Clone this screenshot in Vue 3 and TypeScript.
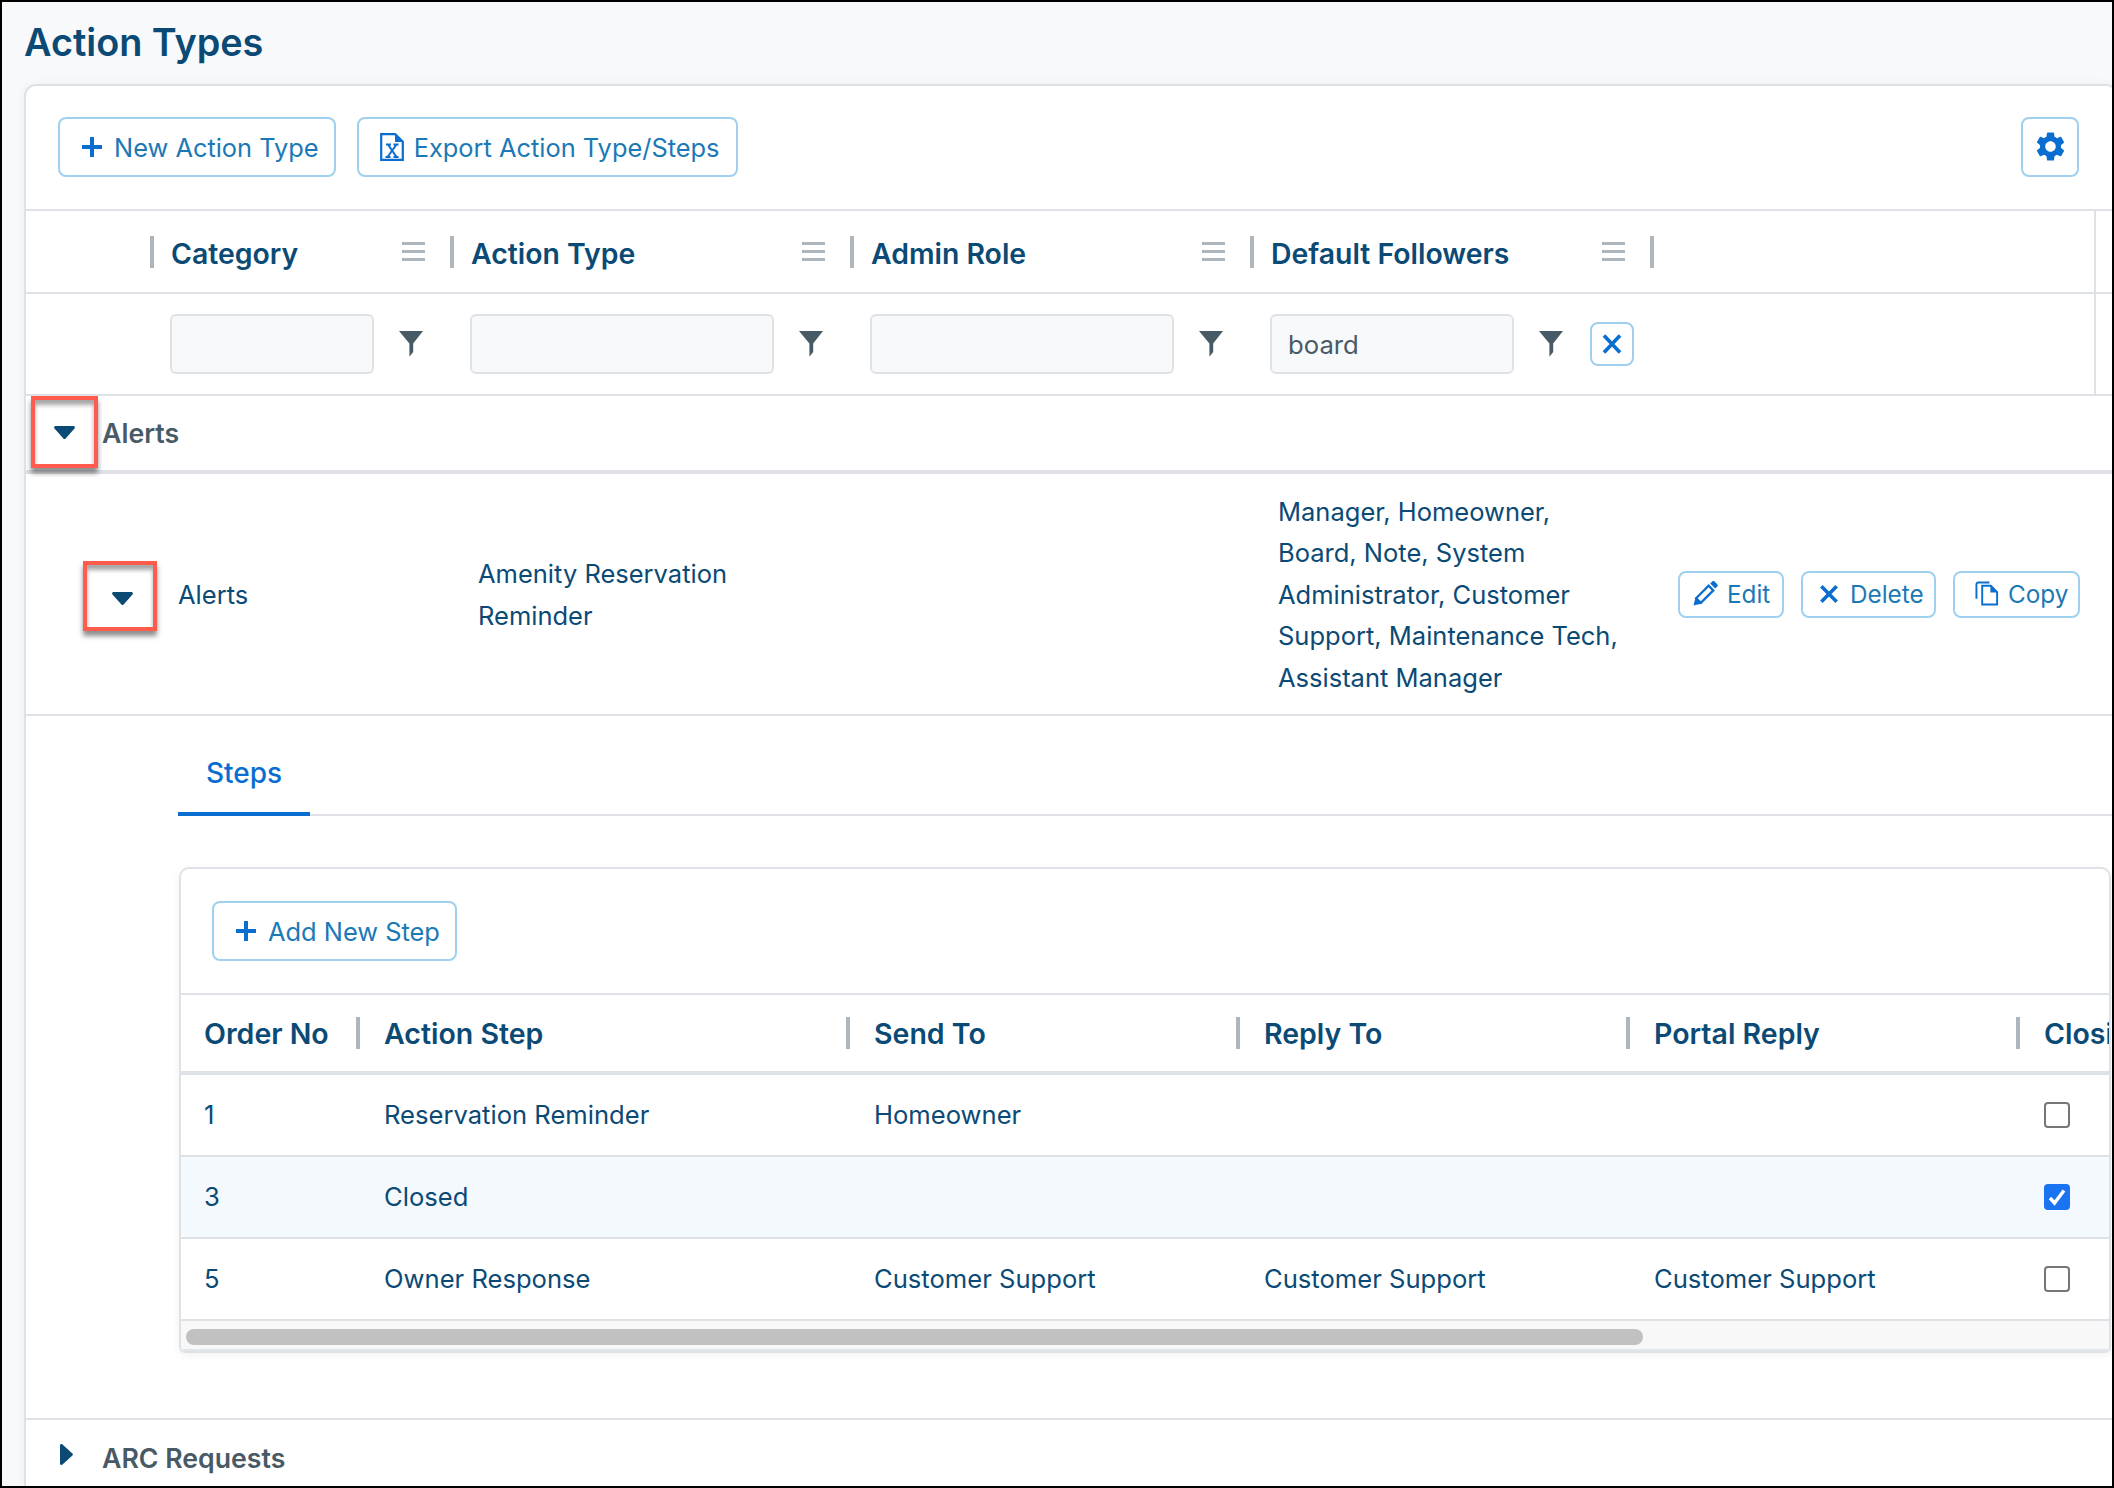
<script setup lang="ts">
/**
 * Action Types 列表页
 */
interface Step {
  order: number
  name: string
  sendTo: string
  replyTo: string
  portalReply: string
  closing: boolean
}

const gridColumns = [
  { key: 'category', label: 'Category' },
  { key: 'actionType', label: 'Action Type' },
  { key: 'adminRole', label: 'Admin Role' },
  { key: 'followers', label: 'Default Followers' },
]

const stepColumns = ['Order No', 'Action Step', 'Send To', 'Reply To', 'Portal Reply', 'Closing']

const steps: Step[] = [
  { order: 1, name: 'Reservation Reminder', sendTo: 'Homeowner', replyTo: '', portalReply: '', closing: false },
  { order: 3, name: 'Closed', sendTo: '', replyTo: '', portalReply: '', closing: true },
  { order: 5, name: 'Owner Response', sendTo: 'Customer Support', replyTo: 'Customer Support', portalReply: 'Customer Support', closing: false },
]
</script>

<template>
  <div class="frame">
    <h1 class="page-title">Action Types</h1>

    <div class="card">
      <div class="toolbar">
        <button class="btn btn-lg">
          <svg class="ico-plus" viewBox="0 0 20 20"><path d="M8 0h4v8h8v4h-8v8H8v-8H0V8h8z" /></svg>
          <span class="btn-text">New Action Type</span>
        </button>
        <button class="btn btn-lg btn-export">
          <svg class="ico-xls" viewBox="0 0 24 28">
            <path d="M1.200 1.200h14l7.600 7.600v18h-21.600z" fill="none" stroke="#0a6ed1" stroke-width="2.200" />
            <path d="M15 1l8 8h-8z" fill="#0a6ed1" />
            <path d="M8 11.500l8.500 12.500M16.500 11.500L7.500 24M6 11.500h5M13.500 11.500h5M5.500 24h5M13.500 24h5" fill="none" stroke="#0a6ed1" stroke-width="2" />
          </svg>
          <span class="btn-text">Export Action Type/Steps</span>
        </button>
        <button class="btn btn-gear">
          <svg viewBox="0 0 24 24" width="35" height="35">
            <path d="M19.14 12.94c.04-.3.06-.61.06-.94 0-.32-.02-.64-.07-.94l2.03-1.58a.49.49 0 0 0 .12-.61l-1.92-3.32a.488.488 0 0 0-.59-.22l-2.39.96c-.5-.38-1.03-.7-1.62-.94l-.36-2.54a.484.484 0 0 0-.48-.41h-3.84c-.24 0-.43.17-.47.41l-.36 2.54c-.59.24-1.13.57-1.62.94l-2.39-.96c-.22-.08-.47 0-.59.22L2.74 8.87c-.12.21-.08.47.12.61l2.03 1.58c-.05.3-.09.63-.09.94s.02.64.07.94l-2.03 1.58a.49.49 0 0 0-.12.61l1.92 3.32c.12.22.37.29.59.22l2.39-.96c.5.38 1.03.7 1.62.94l.36 2.54c.05.24.24.41.48.41h3.84c.24 0 .44-.17.47-.41l.36-2.54c.59-.24 1.13-.56 1.62-.94l2.39.96c.22.08.47 0 .59-.22l1.92-3.32c.12-.22.07-.47-.12-.61l-2.01-1.58zM12 15.6c-1.98 0-3.6-1.62-3.6-3.6s1.62-3.6 3.6-3.6 3.6 1.62 3.6 3.6-1.62 3.6-3.6 3.6z" />
          </svg>
        </button>
      </div>

      <div class="grid-head">
        <div class="head-row grid-cols">
          <span />
          <div v-for="col in gridColumns" :key="col.key" class="head-cell">
            <i class="sep" />
            <span class="head-label">{{ col.label }}</span>
            <span class="menu-ico"><i /><i /><i /></span>
          </div>
          <div class="head-cell"><i class="sep" /></div>
        </div>

        <div class="filter-row grid-cols">
          <span />
          <div v-for="col in gridColumns" :key="col.key" class="filter-cell" :class="`filter-${col.key}`">
            <input class="filter-input" :value="col.key === 'followers' ? 'board' : ''">
            <svg class="ico-filter" viewBox="0 0 24 26"><path d="M0 0h24L14.2 12.6V21L10.4 25.8V12.6z" /></svg>
            <button v-if="col.key === 'followers'" class="btn btn-clear">
              <svg viewBox="0 0 20 20" width="20" height="20"><path d="M2 1.5l16 17M18 1.5l-16 17" stroke="currentColor" stroke-width="3.6" fill="none" /></svg>
            </button>
          </div>
        </div>
      </div>

      <div class="group-row">
        <span class="mark mark-group" />
        <svg class="caret caret-group" viewBox="0 0 21 13"><path d="M1.6 0h17.8c1.3 0 2 1.5 1.1 2.5l-8.9 9.9c-.6.7-1.6.7-2.2 0L.5 2.5C-.4 1.5.3 0 1.6 0z" /></svg>
        <span class="group-label">Alerts</span>
      </div>

      <div class="data-row grid-cols">
        <div class="lead-cell">
          <span class="mark mark-row" />
          <svg class="caret caret-row" viewBox="0 0 21 13"><path d="M1.6 0h17.8c1.3 0 2 1.5 1.1 2.5l-8.9 9.9c-.6.7-1.6.7-2.2 0L.5 2.5C-.4 1.5.3 0 1.6 0z" /></svg>
        </div>
        <div class="data-cell">Alerts</div>
        <div class="data-cell"><span class="wrap-type">Amenity Reservation Reminder</span></div>
        <div class="data-cell" />
        <div class="data-cell"><span class="wrap-followers">Manager, Homeowner, Board, Note, System Administrator, Customer Support, Maintenance Tech, Assistant Manager</span></div>
        <div class="actions">
          <button class="btn btn-sm btn-edit">
            <svg viewBox="0 0 24 24" width="25" height="25" fill="none" stroke="currentColor" stroke-width="2.2">
              <path d="M3 16.500L15 4.500l4.500 4.500L7.500 21z" />
              <path d="M.5 23.500l2-8 6 6z" fill="currentColor" stroke="none" />
              <path d="M16.500 2.500l2-2c.7-.6 1.500-.6 2.200 0l2.600 2.600c.6.7.6 1.500 0 2.200l-2 2z" fill="currentColor" stroke="none" />
            </svg>
            Edit
          </button>
          <button class="btn btn-sm btn-delete">
            <svg viewBox="0 0 20 20" width="18" height="18"><path d="M1.500 1.500l17 17M18.500 1.500l-17 17" stroke="currentColor" stroke-width="4" fill="none" /></svg>
            Delete
          </button>
          <button class="btn btn-sm btn-copy">
            <svg viewBox="0 0 26 26" width="25" height="25" fill="none" stroke="currentColor" stroke-width="2">
              <path d="M15 1.500H3.500a2 2 0 0 0-2 2v15" />
              <path d="M7.500 5h9l6.500 6.500v13H7.500z" />
              <path d="M16 5l7 7h-7z" fill="currentColor" stroke="none" />
            </svg>
            Copy
          </button>
        </div>
      </div>

      <div class="detail">
        <div class="tabs">
          <span class="tab active">Steps</span>
        </div>

        <div class="steps-card">
          <div class="steps-toolbar">
            <button class="btn btn-lg">
              <svg class="ico-plus" viewBox="0 0 20 20"><path d="M8 0h4v8h8v4h-8v8H8v-8H0V8h8z" /></svg>
              <span class="btn-text">Add New Step</span>
            </button>
          </div>

          <div class="steps-head steps-cols">
            <div v-for="(col, i) in stepColumns" :key="col" class="steps-th">
              <i v-if="i > 0" class="sep" />
              <span class="th-label">{{ col }}</span>
            </div>
          </div>

          <div
            v-for="step in steps"
            :key="step.order"
            class="steps-row steps-cols"
            :class="{ selected: step.closing }"
          >
            <div class="steps-td first">{{ step.order }}</div>
            <div class="steps-td">{{ step.name }}</div>
            <div class="steps-td">{{ step.sendTo }}</div>
            <div class="steps-td">{{ step.replyTo }}</div>
            <div class="steps-td">{{ step.portalReply }}</div>
            <div class="steps-td">
              <span class="check" :class="{ on: step.closing }">
                <svg v-if="step.closing" viewBox="0 0 20 20" width="20" height="20"><path d="M3 11l4.500 5L17 3.500" stroke="#fff" stroke-width="3.400" fill="none" /></svg>
              </span>
            </div>
          </div>

          <div class="scroll-track"><span class="scroll-thumb" /></div>
        </div>
      </div>

      <div class="group-row group-closed">
        <svg class="caret-right" viewBox="0 0 13 21"><path d="M0 1.600v17.800c0 1.300 1.500 2 2.500 1.100l9.900-8.900c.7-.6.7-1.600 0-2.200L2.500.5C1.500-.4 0 .3 0 1.600z" /></svg>
        <span class="group-label">ARC Requests</span>
      </div>
    </div>
  </div>
</template>

<style scoped>
.frame {
  box-sizing: border-box;
  width: 2114px;
  height: 1488px;
  border: 2px solid #000;
  background: #f8f9fb;
  overflow: hidden;
  font-family: Inter, "Noto Sans", sans-serif;
  color: #0b4a75;
}

.page-title {
  margin: 0;
  height: 82px;
  padding: 15px 0 0 22px;
  box-sizing: border-box;
  font-size: 37.8px;
  line-height: 50px;
  font-weight: 600;
  color: #0b4a75;
}

.card {
  box-sizing: border-box;
  width: 2094px;
  margin-left: 22px;
  height: 1500px;
  background: #fff;
  border: 2px solid #dee2e6;
  border-radius: 12px 12px 0 0;
  box-shadow: 0 0 10px rgba(0, 0, 0, 0.05);
}

.toolbar {
  box-sizing: border-box;
  height: 125px;
  display: flex;
  align-items: center;
  gap: 21px;
  padding: 0 37px 2px 32px;
  border-bottom: 2px solid #dee2e6;
}

.btn {
  display: inline-flex;
  align-items: center;
  justify-content: center;
  box-sizing: border-box;
  margin: 0;
  padding: 0;
  border: 2px solid #9fd0ef;
  border-radius: 8px;
  background: #fff;
  font-family: inherit;
  color: #1b79b6;
  white-space: nowrap;
}

.btn svg {
  color: #0a6ed1;
  fill: #0a6ed1;
  flex-shrink: 0;
}

.btn-lg {
  height: 60px;
  font-size: 25.4px;
  padding: 0 15px 0 22px;
  gap: 12px;
}

.btn-text {
  padding-top: 2px;
}

.ico-plus {
  width: 20px;
  height: 20px;
}

.btn-export {
  padding-left: 21px;
  padding-right: 16px;
  gap: 10px;
}

.ico-xls {
  width: 24px;
  height: 28px;
}

.btn-gear {
  width: 58px;
  height: 60px;
  margin-left: auto;
  padding: 0;
}

.grid-cols {
  display: grid;
  grid-template-columns: 126px 300px 400px 400px 400px 1fr;
}

.grid-head {
  position: relative;
}

.grid-head::after {
  content: '';
  position: absolute;
  top: 0;
  bottom: 0;
  left: 2068px;
  width: 2px;
  background: #dee2e6;
}

.head-row {
  box-sizing: border-box;
  height: 83px;
  border-bottom: 2px solid #dee2e6;
}

.head-cell {
  display: flex;
  align-items: center;
  padding-right: 27px;
}

.sep {
  flex: none;
  width: 4px;
  height: 32px;
  background: #adb5bd;
}

.head-cell .sep {
  margin-left: -2px;
}

.head-label {
  margin-left: 17px;
  padding-top: 3px;
  font-size: 28.4px;
  font-weight: 600;
  color: #0b4a75;
}

.menu-ico {
  display: flex;
  flex-direction: column;
  gap: 5px;
  margin-left: auto;
  width: 23px;
}

.menu-ico i {
  display: block;
  height: 3px;
  background: #adb5bd;
}

.filter-row {
  box-sizing: border-box;
  height: 102px;
  border-bottom: 2px solid #dee2e6;
}

.filter-cell {
  display: flex;
  align-items: center;
  padding-left: 18px;
}

.filter-input {
  box-sizing: border-box;
  height: 60px;
  width: 204px;
  padding: 0 16px;
  border: 2px solid #dee2e6;
  border-radius: 6px;
  background: #f8f9fb;
  font-family: inherit;
  font-size: 25.7px;
  color: #495a67;
}

.filter-actionType .filter-input,
.filter-adminRole .filter-input {
  width: 304px;
}

.filter-followers .filter-input {
  width: 244px;
}

.ico-filter {
  width: 24px;
  height: 26px;
  margin-left: 25px;
  fill: #495a67;
}

.btn-clear {
  width: 44px;
  height: 44px;
  margin-left: 27px;
}

.btn-clear svg {
  fill: none;
}

.group-row {
  position: relative;
  box-sizing: border-box;
  height: 78px;
  display: flex;
  align-items: center;
  padding-left: 28px;
  border-bottom: 4px solid #dee2e6;
}

.caret {
  width: 21px;
  height: 13px;
  fill: #0b4a75;
}

.caret-group {
  margin-top: -2px;
}

.caret-row {
  margin-top: 8px;
}

.group-label {
  margin-left: 27px;
  font-size: 26.7px;
  font-weight: 600;
  color: #495a67;
}

.mark {
  position: absolute;
  box-sizing: border-box;
  border: 4px solid #ff5c4d;
  box-shadow: 0 5px 5px rgba(0, 0, 0, 0.45), inset 0 5px 4px rgba(0, 0, 0, 0.35);
}

.mark-group {
  left: 5px;
  top: 0;
  width: 67px;
  height: 72px;
}

.data-row {
  box-sizing: border-box;
  height: 242px;
  padding-top: 1px;
  border-bottom: 2px solid #dee2e6;
  font-size: 25.5px;
  line-height: 41.5px;
  color: #0b4a75;
}

.lead-cell {
  position: relative;
  display: flex;
  align-items: center;
  padding-left: 86px;
}

.mark-row {
  left: 57px;
  top: 86px;
  width: 74px;
  height: 70px;
}

.data-cell {
  display: flex;
  align-items: center;
  padding-left: 26px;
}

.wrap-type {
  width: 280px;
}

.wrap-followers {
  width: 344px;
}

.actions {
  display: flex;
  align-items: center;
  gap: 17px;
  padding-left: 26px;
}

.btn-sm {
  height: 47px;
  padding-bottom: 2px;
  font-size: 24.3px;
  justify-content: flex-start;
}

.btn-sm svg {
  fill: none;
}

.btn-edit {
  width: 106px;
  padding-left: 13px;
  gap: 9px;
}

.btn-delete {
  width: 135px;
  padding-left: 17px;
  gap: 12px;
}

.btn-copy {
  width: 127px;
  padding-left: 20px;
  gap: 8px;
}

.detail {
  height: 704px;
  border-bottom: 2px solid #dee2e6;
  box-sizing: border-box;
}

.tabs {
  box-sizing: border-box;
  height: 100px;
  margin-left: 152px;
  border-bottom: 2px solid #dee2e6;
  display: flex;
  align-items: flex-end;
}

.tab {
  box-sizing: border-box;
  width: 132px;
  height: 69px;
  margin-bottom: -2px;
  text-align: center;
  font-size: 28px;
  line-height: 52px;
  font-weight: 500;
  color: #0a6ed1;
  border-bottom: 4px solid #0a6ed1;
}

.steps-card {
  box-sizing: border-box;
  width: 1932px;
  height: 486px;
  margin: 51px 0 0 153px;
  border: 2px solid #dee2e6;
  border-radius: 10px 10px 6px 6px;
  overflow: hidden;
  box-shadow: 0 2px 8px rgba(0, 0, 0, 0.06);
  background: #fff;
}

.steps-toolbar {
  box-sizing: border-box;
  height: 126px;
  display: flex;
  align-items: center;
  padding: 0 0 1px 31px;
  border-bottom: 2px solid #dee2e6;
}

.steps-cols {
  display: grid;
  grid-template-columns: 176px 490px 390px 390px 390px 1fr;
}

.steps-head {
  box-sizing: border-box;
  height: 80px;
  border-bottom: 4px solid #dee2e6;
}

.steps-th {
  display: flex;
  align-items: center;
  gap: 24px;
  font-size: 28.5px;
  font-weight: 600;
  white-space: nowrap;
  color: #0b4a75;
}

.steps-th .sep {
  margin-left: -1px;
}

.steps-th:first-child {
  padding-left: 23px;
}

.th-label {
  padding-top: 1px;
}

.steps-row {
  box-sizing: border-box;
  height: 82px;
  border-bottom: 2px solid #dee2e6;
  font-size: 25.6px;
  color: #0b4a75;
}

.steps-row.selected {
  background: #f4f9fd;
}

.steps-td {
  display: flex;
  align-items: center;
  padding: 0 0 1px 27px;
  white-space: nowrap;
}

.steps-td.first {
  padding-left: 23px;
}

.check {
  box-sizing: border-box;
  display: flex;
  align-items: center;
  justify-content: center;
  width: 26px;
  height: 26px;
  border: 2px solid #767676;
  border-radius: 4px;
  background: #fff;
}

.check.on {
  border: none;
  background: #1a73f0;
}

.scroll-track {
  box-sizing: border-box;
  height: 30px;
  padding: 8px 0 0 5px;
  background: #f8f8f8;
  border-bottom: 2px solid #e3e6e9;
}

.scroll-thumb {
  display: block;
  width: 1457px;
  height: 16px;
  border-radius: 8px;
  background: #c1c1c1;
}

.group-closed {
  height: 76px;
  border-bottom: none;
  padding: 0 0 0 34px;
}

.caret-right {
  width: 13px;
  height: 21px;
  fill: #0b4a75;
  margin-top: -7px;
}

.group-closed .group-label {
  margin-left: 29px;
}
</style>

<style>
html,
body {
  margin: 0;
  background: #fff;
}
</style>
